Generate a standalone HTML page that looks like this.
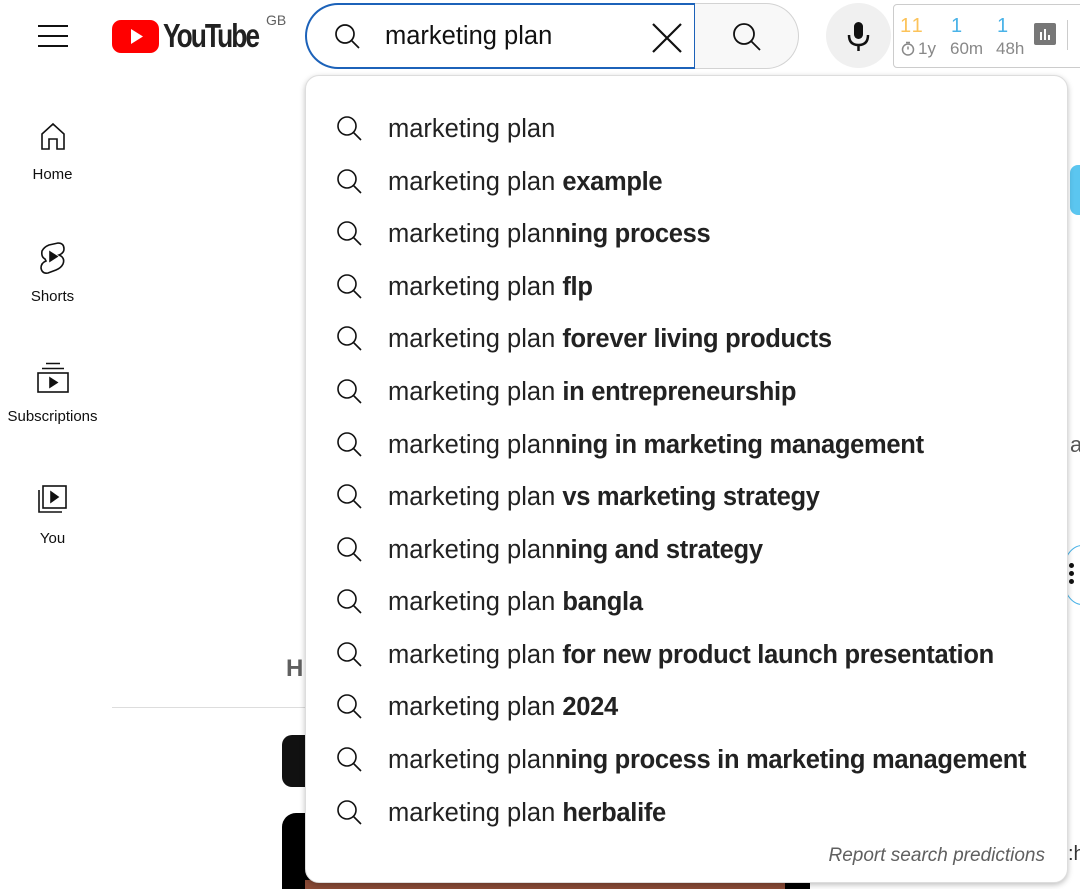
<!DOCTYPE html>
<html><head><meta charset="utf-8"><style>
*{margin:0;padding:0;box-sizing:border-box}
body{width:1080px;height:889px;overflow:hidden;background:#fff;font-family:"Liberation Sans",sans-serif;color:#0f0f0f;position:relative}
.abs{position:absolute}
.side{position:absolute;left:0;width:105px;text-align:center;font-size:15px}
.side svg{display:block;margin:0 auto 14px}
.dd{position:absolute;left:305px;top:75px;width:763px;height:808px;background:#fff;border-radius:14px;box-shadow:0 2px 6px rgba(0,0,0,.25);border:1px solid #ddd}
.it{position:absolute;left:30px;height:40px;display:flex;align-items:center;font-size:25.5px;white-space:nowrap;color:#222}
.it svg{margin-right:24px}
.it b{font-weight:bold;letter-spacing:-0.3px}
</style></head><body>
<!-- hamburger -->
<div class="abs" style="left:38px;top:25px;width:30px;height:2px;background:#111"></div>
<div class="abs" style="left:38px;top:35px;width:30px;height:2px;background:#111"></div>
<div class="abs" style="left:38px;top:45px;width:30px;height:2px;background:#111"></div>
<!-- logo -->
<div class="abs" style="left:112px;top:20px;width:47px;height:33px;background:#f00;border-radius:9px"></div>
<svg class="abs" style="left:112px;top:20px" width="47" height="33"><path d="M19 9 L31 16.5 L19 24Z" fill="#fff"/></svg>
<div class="abs" style="left:163px;top:17px;font-size:33px;font-weight:bold;letter-spacing:-2.5px;transform:scaleX(.8);transform-origin:left;color:#212121">YouTube</div>
<div class="abs" style="left:266px;top:12px;font-size:14px;color:#606060">GB</div>
<!-- search box -->
<div class="abs" style="left:305px;top:3px;width:390px;height:66px;border:2px solid #1c62b9;border-radius:33px 0 0 33px;border-right-width:1px"></div>
<svg class="abs" style="left:334px;top:23px" width="28" height="28" fill="none" stroke="#111" stroke-width="1.7"><circle cx="11" cy="11" r="9"/><path d="M17.5 17.5 L25 25"/></svg>
<div class="abs" style="left:385px;top:22px;font-size:25.5px;color:#111">marketing plan</div>
<svg class="abs" style="left:651px;top:22px" width="32" height="32" stroke="#111" stroke-width="2.2"><path d="M2 2L30 30M30 2L2 30"/></svg>
<div class="abs" style="left:695px;top:3px;width:104px;height:66px;background:#f8f8f8;border:1px solid #d3d3d3;border-left:none;border-radius:0 33px 33px 0"></div>
<svg class="abs" style="left:731px;top:21px" width="32" height="32" fill="none" stroke="#111" stroke-width="1.8"><circle cx="13" cy="13" r="10"/><path d="M20.5 20.5 L29 29"/></svg>
<!-- mic -->
<div class="abs" style="left:826px;top:3px;width:65px;height:65px;border-radius:50%;background:#f0f0f0"></div>
<svg class="abs" style="left:844px;top:20px" width="30" height="32"><rect x="10" y="2" width="9" height="17" rx="4.5" fill="#111"/><path d="M5 15 Q5 25 14.5 25 Q24 25 24 15" fill="none" stroke="#111" stroke-width="2.5"/><path d="M14.5 25 V31" stroke="#111" stroke-width="2.5"/></svg>
<!-- extension box -->
<div class="abs" style="left:893px;top:4px;width:200px;height:64px;border:1px solid #ccc;border-radius:4px"></div>
<div class="abs" style="left:900px;top:15px;font-size:20px;color:#fcc35a;letter-spacing:2px">11</div>
<div class="abs" style="left:951px;top:15px;font-size:20px;color:#4ab3e8">1</div>
<div class="abs" style="left:997px;top:15px;font-size:20px;color:#4ab3e8">1</div>
<svg class="abs" style="left:901px;top:41px" width="14" height="15" fill="none" stroke="#888" stroke-width="1.5"><circle cx="7" cy="8.5" r="5.5"/><path d="M5 1.5h4M7 8.5V5.5"/></svg>
<div class="abs" style="left:918px;top:39px;font-size:17px;color:#888">1y</div>
<div class="abs" style="left:950px;top:39px;font-size:17px;color:#888">60m</div>
<div class="abs" style="left:996px;top:39px;font-size:17px;color:#888">48h</div>
<div class="abs" style="left:1034px;top:23px;width:22px;height:22px;background:#777;border-radius:2px"></div>
<svg class="abs" style="left:1034px;top:23px" width="22" height="22" fill="#fff"><rect x="6" y="9" width="2" height="8"/><rect x="10" y="6" width="2" height="11"/><rect x="14" y="12" width="2" height="5"/></svg>
<div class="abs" style="left:1067px;top:20px;width:1px;height:30px;background:#ccc"></div>
<!-- sidebar -->
<div class="side" style="top:120px"><svg width="30" height="32" fill="none" stroke="#111" stroke-width="1.6"><path d="M4 14 L15 4 L26 14 V29 H19 V19 H11 V29 H4Z"/></svg>Home</div>
<div class="side" style="top:240px"><svg width="30" height="34" fill="none" stroke="#111" stroke-width="1.6"><path d="M20 3 Q26 3 26 9 Q26 13 21 15 L23 16 Q27 19 25 24 Q23 28 18 30 L10 33 Q4 34 3 28 Q3 23 8 21 L7 19 Q3 17 4 11 Q6 7 11 5 Z"/><path d="M12 12 L19 16.5 L12 21Z" fill="#111"/></svg>Shorts</div>
<div class="side" style="top:362px"><svg width="34" height="32" fill="none" stroke="#111" stroke-width="1.6"><path d="M10 1.5h14M6 6.5h22"/><rect x="2" y="11" width="30" height="19"/><path d="M14 16 L21 20.5 L14 25Z" fill="#111"/></svg>Subscriptions</div>
<div class="side" style="top:484px"><svg width="34" height="32" fill="none" stroke="#111" stroke-width="1.6"><rect x="7" y="2" width="23" height="22"/><path d="M3 6 V28 H26"/><path d="M15 8 L22 13 L15 18Z" fill="#111"/></svg>You</div>
<!-- background bits -->
<div class="abs" style="left:286px;top:655px;font-size:24px;font-weight:bold;color:#606060">H</div>
<div class="abs" style="left:112px;top:707px;width:200px;height:1px;background:#ddd"></div>
<div class="abs" style="left:282px;top:735px;width:40px;height:52px;background:#111;border-radius:10px"></div>
<div class="abs" style="left:282px;top:813px;width:40px;height:76px;background:#000;border-radius:14px 0 0 0"></div>
<div class="abs" style="left:305px;top:880px;width:480px;height:9px;background:#8a4a36"></div>
<div class="abs" style="left:785px;top:880px;width:25px;height:9px;background:#000"></div>
<div class="abs" style="left:1070px;top:165px;width:14px;height:50px;background:#5bc6f0;border-radius:8px 0 0 8px"></div>
<div class="abs" style="left:1070px;top:432px;font-size:22px;color:#555">a</div>
<div class="abs" style="left:1062px;top:545px;width:40px;height:60px;border:1.5px solid #4ab3e8;border-radius:50%"></div>
<div class="abs" style="left:1069px;top:563px;width:5px;height:5px;background:#111;border-radius:50%"></div>
<div class="abs" style="left:1069px;top:571px;width:5px;height:5px;background:#111;border-radius:50%"></div>
<div class="abs" style="left:1069px;top:579px;width:5px;height:5px;background:#111;border-radius:50%"></div>
<div class="abs" style="left:1068px;top:843px;font-size:20px;color:#333">:h</div>
<!-- dropdown -->
<div class="dd">
<div class="it" style="top:33px"><svg width="28" height="28" fill="none" stroke="#111" stroke-width="1.6"><circle cx="11" cy="11" r="9"/><path d="M17.5 17.5 L25 25"/></svg>marketing plan</div>
<div class="it" style="top:86px"><svg width="28" height="28" fill="none" stroke="#111" stroke-width="1.6"><circle cx="11" cy="11" r="9"/><path d="M17.5 17.5 L25 25"/></svg>marketing plan&nbsp;<b>example</b></div>
<div class="it" style="top:138px"><svg width="28" height="28" fill="none" stroke="#111" stroke-width="1.6"><circle cx="11" cy="11" r="9"/><path d="M17.5 17.5 L25 25"/></svg>marketing plan<b>ning process</b></div>
<div class="it" style="top:191px"><svg width="28" height="28" fill="none" stroke="#111" stroke-width="1.6"><circle cx="11" cy="11" r="9"/><path d="M17.5 17.5 L25 25"/></svg>marketing plan&nbsp;<b>flp</b></div>
<div class="it" style="top:243px"><svg width="28" height="28" fill="none" stroke="#111" stroke-width="1.6"><circle cx="11" cy="11" r="9"/><path d="M17.5 17.5 L25 25"/></svg>marketing plan&nbsp;<b>forever living products</b></div>
<div class="it" style="top:296px"><svg width="28" height="28" fill="none" stroke="#111" stroke-width="1.6"><circle cx="11" cy="11" r="9"/><path d="M17.5 17.5 L25 25"/></svg>marketing plan&nbsp;<b>in entrepreneurship</b></div>
<div class="it" style="top:349px"><svg width="28" height="28" fill="none" stroke="#111" stroke-width="1.6"><circle cx="11" cy="11" r="9"/><path d="M17.5 17.5 L25 25"/></svg>marketing plan<b>ning in marketing management</b></div>
<div class="it" style="top:401px"><svg width="28" height="28" fill="none" stroke="#111" stroke-width="1.6"><circle cx="11" cy="11" r="9"/><path d="M17.5 17.5 L25 25"/></svg>marketing plan&nbsp;<b>vs marketing strategy</b></div>
<div class="it" style="top:454px"><svg width="28" height="28" fill="none" stroke="#111" stroke-width="1.6"><circle cx="11" cy="11" r="9"/><path d="M17.5 17.5 L25 25"/></svg>marketing plan<b>ning and strategy</b></div>
<div class="it" style="top:506px"><svg width="28" height="28" fill="none" stroke="#111" stroke-width="1.6"><circle cx="11" cy="11" r="9"/><path d="M17.5 17.5 L25 25"/></svg>marketing plan&nbsp;<b>bangla</b></div>
<div class="it" style="top:559px"><svg width="28" height="28" fill="none" stroke="#111" stroke-width="1.6"><circle cx="11" cy="11" r="9"/><path d="M17.5 17.5 L25 25"/></svg>marketing plan&nbsp;<b>for new product launch presentation</b></div>
<div class="it" style="top:611px"><svg width="28" height="28" fill="none" stroke="#111" stroke-width="1.6"><circle cx="11" cy="11" r="9"/><path d="M17.5 17.5 L25 25"/></svg>marketing plan&nbsp;<b>2024</b></div>
<div class="it" style="top:664px"><svg width="28" height="28" fill="none" stroke="#111" stroke-width="1.6"><circle cx="11" cy="11" r="9"/><path d="M17.5 17.5 L25 25"/></svg>marketing plan<b>ning process in marketing management</b></div>
<div class="it" style="top:717px"><svg width="28" height="28" fill="none" stroke="#111" stroke-width="1.6"><circle cx="11" cy="11" r="9"/><path d="M17.5 17.5 L25 25"/></svg>marketing plan&nbsp;<b>herbalife</b></div>
<div class="abs" style="right:22px;top:769px;font-size:19px;font-style:italic;color:#606060">Report search predictions</div>
</div>
</body></html>
